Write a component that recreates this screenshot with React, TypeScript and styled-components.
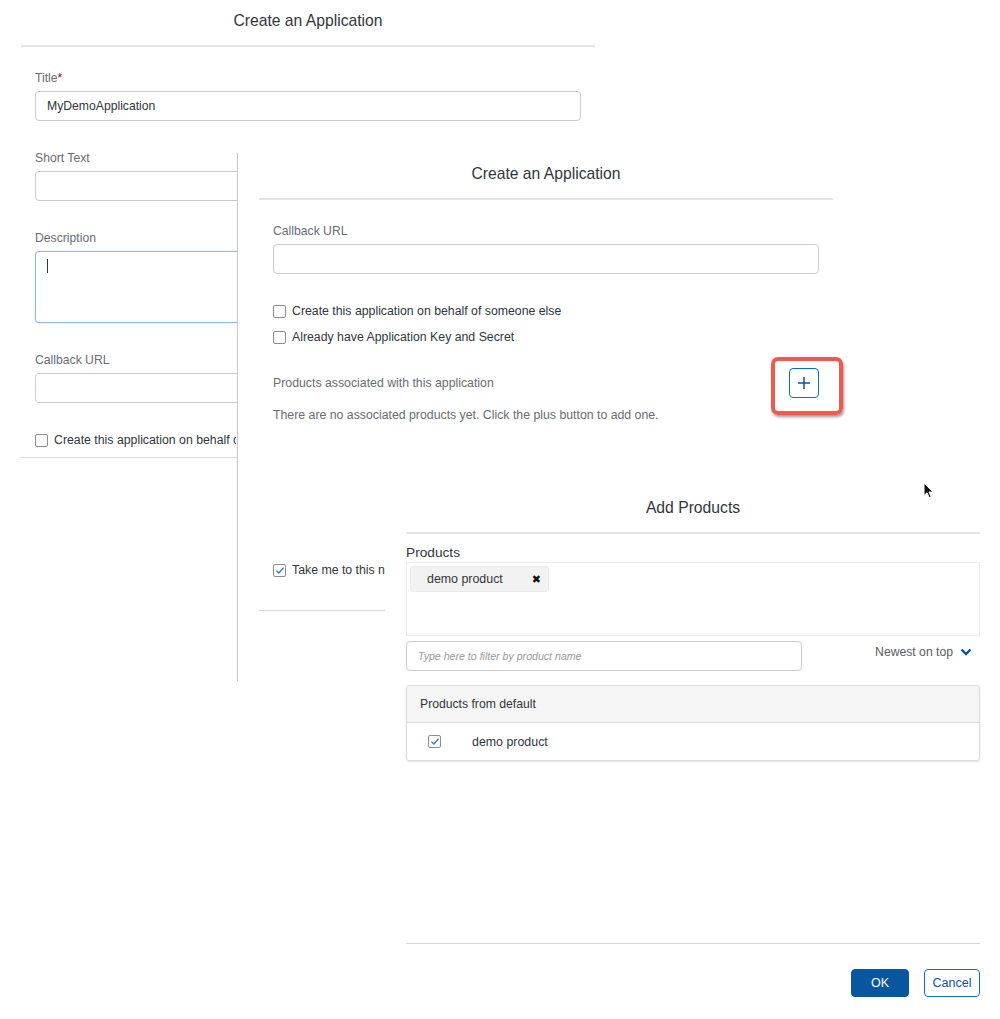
import React from "react";
import styled, { createGlobalStyle } from "styled-components";

const Global = createGlobalStyle`
  html, body { margin: 0; padding: 0; background: #fff; }
  body { font-family: "Liberation Sans", Arial, sans-serif; color: #32363a; }
  * { box-sizing: border-box; }
`;

const Stage = styled.div`
  position: relative;
  width: 1000px;
  height: 1019px;
  overflow: hidden;
  background: #fff;
`;

const Window = styled.section<{ $left: number; $top: number; $width: number; $height: number; $edge?: boolean; $padL?: number; $padR?: number }>`
  position: absolute;
  left: ${(p) => p.$left}px;
  top: ${(p) => p.$top}px;
  width: ${(p) => p.$width}px;
  height: ${(p) => p.$height}px;
  background: #fff;
  border-left: ${(p) => (p.$edge ? "1px solid #c8c8c8" : "none")};
  padding-left: ${(p) => p.$padL ?? 0}px;
  padding-right: ${(p) => p.$padR ?? 0}px;
  display: flex;
  flex-direction: column;
`;

const Inner = styled.div`
  width: 574px;
  display: flex;
  flex-direction: column;
  flex: 1;
`;

const Header = styled.header`
  padding: 11px 0 14px;
  line-height: 20px;
  font-size: 15.7px;
  text-align: center;
  color: #32363a;
  border-bottom: 2px solid #e4e4e4;
`;

const Body = styled.div<{ $padX: number; $padTop: number }>`
  padding: ${(p) => p.$padTop}px ${(p) => p.$padX}px 0;
  display: flex;
  flex-direction: column;
`;

const Field = styled.div<{ $gap?: number }>`
  display: flex;
  flex-direction: column;
  margin-bottom: ${(p) => p.$gap ?? 28}px;
`;

const Label = styled.label`
  font-size: 12.2px;
  line-height: 18px;
  color: #6a6d70;
  margin-bottom: 4px;
`;

const Required = styled.span`
  color: #bb0000;
`;

const Input = styled.div<{ $height?: number; $focus?: boolean }>`
  height: ${(p) => p.$height ?? 30}px;
  border: 1px solid ${(p) => (p.$focus ? "#91b9e6" : "#cccccc")};
  box-shadow: ${(p) => (p.$focus ? "0 0 2px rgba(80,140,220,0.35)" : "none")};
  border-radius: 4px;
  background: #fff;
  font-size: 12.2px;
  color: #32363a;
  padding: 0 11px;
  display: flex;
  align-items: ${(p) => (p.$focus ? "flex-start" : "center")};
  white-space: nowrap;
  overflow: hidden;
`;

const Caret = styled.span`
  display: block;
  width: 1px;
  height: 14px;
  margin-top: 7px;
  background: #32363a;
`;

const CheckRow = styled.div<{ $mt?: number }>`
  display: flex;
  align-items: center;
  height: 18px;
  margin-top: ${(p) => p.$mt ?? 0}px;
  gap: 6px;
  font-size: 12.3px;
  color: #32363a;
  white-space: nowrap;
`;

const Clipped = styled.span<{ $w: number }>`
  display: block;
  width: ${(p) => p.$w}px;
  overflow: hidden;
  white-space: nowrap;
`;

const Box = styled.span`
  width: 13px;
  height: 13px;
  flex: none;
  border: 1px solid #8d8d8d;
  border-radius: 2px;
  background: #fff;
  display: flex;
  align-items: center;
  justify-content: center;
`;

const Separator = styled.div<{ $mt: number }>`
  margin-top: ${(p) => p.$mt}px;
  border-top: 1px solid #d6d6d6;
`;

const ProductsRow = styled.div`
  position: relative;
  margin-top: 22px;
  height: 30px;
  display: flex;
  align-items: center;
  justify-content: space-between;
`;

const Muted = styled.div<{ $mt?: number }>`
  font-size: 12.3px;
  line-height: 16px;
  color: #6a6d70;
  margin-top: ${(p) => p.$mt ?? 0}px;
  white-space: nowrap;
`;

const PlusButton = styled.button`
  position: relative;
  width: 30px;
  height: 30px;
  padding: 0;
  border: 1px solid #0a6ed1;
  border-radius: 4px;
  background: #fff;
  display: flex;
  align-items: center;
  justify-content: center;
`;

const Highlight = styled.span`
  position: absolute;
  left: -19px;
  top: -12px;
  width: 72px;
  height: 58px;
  border: 4px solid #ef5a4d;
  border-radius: 7px;
  box-shadow: 1px 2px 3px rgba(0, 0, 0, 0.4);
  pointer-events: none;
`;

const SectionLabel = styled.div`
  margin-top: 10px;
  font-size: 13.7px;
  line-height: 18px;
  color: #32363a;
`;

const TokenBox = styled.div`
  height: 74px;
  border: 1px solid #ececec;
  padding: 3px;
  display: flex;
  align-items: flex-start;
`;

const Chip = styled.div`
  width: 139px;
  height: 26px;
  background: #f2f2f2;
  border: 1px solid #ebebeb;
  border-radius: 3px;
  padding: 0 7px 0 16px;
  display: flex;
  align-items: center;
  justify-content: space-between;
  font-size: 12.4px;
  color: #32363a;
`;

const Remove = styled.span`
  font-family: "DejaVu Sans", sans-serif;
  font-size: 11px;
  color: #111;
`;

const FilterRow = styled.div`
  margin-top: 5px;
  display: flex;
  justify-content: space-between;
  align-items: flex-start;
`;

const Filter = styled.div`
  width: 396px;
  height: 30px;
  border: 1px solid #cccccc;
  border-radius: 4px;
  padding: 0 11px;
  display: flex;
  align-items: center;
  font-size: 10.6px;
  font-style: italic;
  color: #9a9a9a;
`;

const Sort = styled.div`
  padding-top: 3px;
  margin-right: 8px;
  display: flex;
  align-items: center;
  gap: 7px;
  font-size: 12.2px;
  line-height: 16px;
  color: #5a5d60;
`;

const Table = styled.div`
  margin-top: 14px;
  border: 1px solid #dcdcdc;
  border-radius: 3px;
  box-shadow: 0 1px 2px rgba(0, 0, 0, 0.12);
  overflow: hidden;
`;

const TableHead = styled.div`
  height: 37px;
  background: #f5f5f5;
  border-bottom: 1px solid #dcdcdc;
  padding-left: 13px;
  display: flex;
  align-items: center;
  font-size: 12.2px;
  color: #32363a;
`;

const TableRow = styled.div`
  height: 37px;
  padding-left: 21px;
  display: flex;
  align-items: center;
  gap: 31px;
  font-size: 12.4px;
  color: #32363a;
`;

const Footer = styled.footer`
  margin-top: auto;
  border-top: 1px solid #d6d6d6;
  padding: 25px 0 22px;
  display: flex;
  justify-content: flex-end;
  gap: 15px;
`;

const Button = styled.button<{ $primary?: boolean; $w: number }>`
  width: ${(p) => p.$w}px;
  height: 28px;
  border-radius: 4px;
  font-family: "Liberation Sans", Arial, sans-serif;
  font-size: 12.5px;
  padding: 0;
  border: 1px solid ${(p) => (p.$primary ? "#0a55a0" : "#0a6ed1")};
  background: ${(p) => (p.$primary ? "#0a55a0" : "#fff")};
  color: ${(p) => (p.$primary ? "#fff" : "#0a55a0")};
`;

const Pointer = styled.svg`
  position: absolute;
  left: 923px;
  top: 482px;
`;

const Check = () => (
  <svg width="10" height="9" viewBox="0 0 10 9">
    <path d="M1.5 4.8 L3.9 7 L8.5 1.8" fill="none" stroke="#2a7ad6" strokeWidth="1.3" />
  </svg>
);

const CheckBox = ({ checked }: { checked?: boolean }) => <Box>{checked && <Check />}</Box>;

export default function App() {
  return (
    <Stage>
      <Global />
      <Window $left={21} $top={0} $width={574} $height={470}>
        <Inner>
          <Header>Create an Application</Header>
          <Body $padX={14} $padTop={22}>
            <Field>
              <Label>
                Title<Required>*</Required>
              </Label>
              <Input>MyDemoApplication</Input>
            </Field>
            <Field>
              <Label>Short Text</Label>
              <Input />
            </Field>
            <Field>
              <Label>Description</Label>
              <Input $height={72} $focus>
                <Caret />
              </Input>
            </Field>
            <Field>
              <Label>Callback URL</Label>
              <Input />
            </Field>
            <CheckRow>
              <CheckBox />
              <Clipped $w={182}>Create this application on behalf of someone else</Clipped>
            </CheckRow>
          </Body>
          <Separator $mt={8} />
        </Inner>
      </Window>

      <Window $left={237} $top={153} $width={620} $height={528} $edge $padL={21}>
        <Inner>
          <Header>Create an Application</Header>
          <Body $padX={14} $padTop={22}>
            <Field $gap={0}>
              <Label>Callback URL</Label>
              <Input />
            </Field>
            <CheckRow $mt={28}>
              <CheckBox />
              Create this application on behalf of someone else
            </CheckRow>
            <CheckRow $mt={8}>
              <CheckBox />
              Already have Application Key and Secret
            </CheckRow>
            <ProductsRow>
              <Muted>Products associated with this application</Muted>
              <PlusButton aria-label="Add products">
                <svg width="14" height="14" viewBox="0 0 14 14">
                  <path d="M7 1 V13 M1 7 H13" stroke="#0854a0" strokeWidth="1.5" />
                </svg>
                <Highlight />
              </PlusButton>
            </ProductsRow>
            <Muted $mt={9}>There are no associated products yet. Click the plus button to add one.</Muted>
            <CheckRow $mt={138}>
              <CheckBox checked />
              <Clipped $w={93}>Take me to this new application</Clipped>
            </CheckRow>
          </Body>
          <Separator $mt={31} />
        </Inner>
      </Window>

      <Window $left={385} $top={487} $width={615} $height={532} $padL={21} $padR={20}>
        <Inner>
          <Header>Add Products</Header>
          <SectionLabel>Products</SectionLabel>
          <TokenBox>
            <Chip>
              demo product
              <Remove>✖</Remove>
            </Chip>
          </TokenBox>
          <FilterRow>
            <Filter>Type here to filter by product name</Filter>
            <Sort>
              Newest on top
              <svg width="12" height="8" viewBox="0 0 12 8">
                <path d="M1.5 1.5 L6 6 L10.5 1.5" fill="none" stroke="#0854a0" strokeWidth="2.4" />
              </svg>
            </Sort>
          </FilterRow>
          <Table>
            <TableHead>Products from default</TableHead>
            <TableRow>
              <CheckBox checked />
              demo product
            </TableRow>
          </Table>
          <Footer>
            <Button $primary $w={58}>OK</Button>
            <Button $w={56}>Cancel</Button>
          </Footer>
        </Inner>
      </Window>

      <Pointer width="12" height="17" viewBox="0 0 12 17">
        <path d="M1 1 L1 13.5 L4 10.8 L6.2 15.6 L8.2 14.7 L6 10 L10 10 Z" fill="#111" stroke="#fff" strokeWidth="1" />
      </Pointer>
    </Stage>
  );
}
